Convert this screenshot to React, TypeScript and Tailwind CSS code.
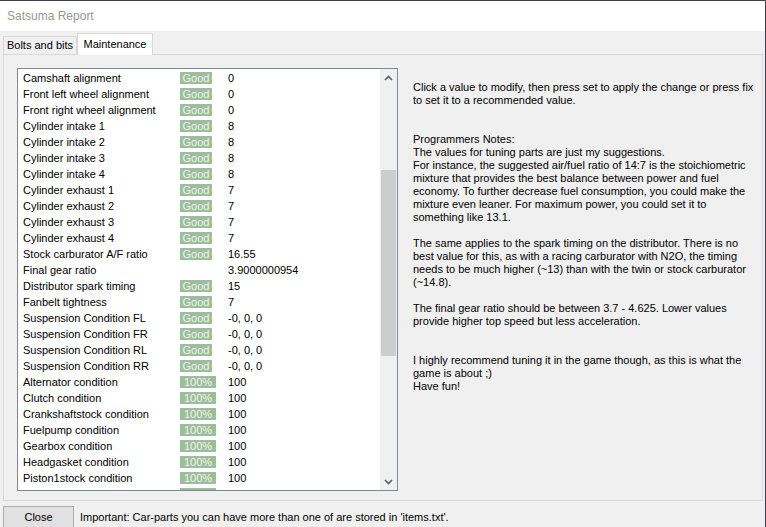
import React from 'react';

type Row = { label: string; badge?: 'Good' | '100%'; value: string };

const rows: Row[] = [
  { label: 'Camshaft alignment', badge: 'Good', value: '0' },
  { label: 'Front left wheel alignment', badge: 'Good', value: '0' },
  { label: 'Front right wheel alignment', badge: 'Good', value: '0' },
  { label: 'Cylinder intake 1', badge: 'Good', value: '8' },
  { label: 'Cylinder intake 2', badge: 'Good', value: '8' },
  { label: 'Cylinder intake 3', badge: 'Good', value: '8' },
  { label: 'Cylinder intake 4', badge: 'Good', value: '8' },
  { label: 'Cylinder exhaust 1', badge: 'Good', value: '7' },
  { label: 'Cylinder exhaust 2', badge: 'Good', value: '7' },
  { label: 'Cylinder exhaust 3', badge: 'Good', value: '7' },
  { label: 'Cylinder exhaust 4', badge: 'Good', value: '7' },
  { label: 'Stock carburator A/F ratio', badge: 'Good', value: '16.55' },
  { label: 'Final gear ratio', value: '3.9000000954' },
  { label: 'Distributor spark timing', badge: 'Good', value: '15' },
  { label: 'Fanbelt tightness', badge: 'Good', value: '7' },
  { label: 'Suspension Condition FL', badge: 'Good', value: '-0, 0, 0' },
  { label: 'Suspension Condition FR', badge: 'Good', value: '-0, 0, 0' },
  { label: 'Suspension Condition RL', badge: 'Good', value: '-0, 0, 0' },
  { label: 'Suspension Condition RR', badge: 'Good', value: '-0, 0, 0' },
  { label: 'Alternator condition', badge: '100%', value: '100' },
  { label: 'Clutch condition', badge: '100%', value: '100' },
  { label: 'Crankshaftstock condition', badge: '100%', value: '100' },
  { label: 'Fuelpump condition', badge: '100%', value: '100' },
  { label: 'Gearbox condition', badge: '100%', value: '100' },
  { label: 'Headgasket condition', badge: '100%', value: '100' },
  { label: 'Piston1stock condition', badge: '100%', value: '100' },
  { label: 'Piston2stock condition', badge: '100%', value: '100' },
];

const notes = [
  'Click a value to modify, then press set to apply the change or press fix',
  'to set it to a recommended value.',
  '',
  '',
  'Programmers Notes:',
  'The values for tuning parts are just my suggestions.',
  'For instance, the suggested air/fuel ratio of 14:7 is the stoichiometric',
  'mixture that provides the best balance between power and fuel',
  'economy. To further decrease fuel consumption, you could make the',
  'mixture even leaner. For maximum power, you could set it to',
  'something like 13.1.',
  '',
  'The same applies to the spark timing on the distributor. There is no',
  'best value for this, as with a racing carburator with N2O, the timing',
  'needs to be much higher (~13) than with the twin or stock carburator',
  '(~14.8).',
  '',
  'The final gear ratio should be between 3.7 - 4.625. Lower values',
  'provide higher top speed but less acceleration.',
  '',
  '',
  'I highly recommend tuning it in the game though, as this is what the',
  'game is about ;)',
  'Have fun!',
].join('\n');

const Chevron: React.FC<{ down?: boolean }> = ({ down }) => (
  <svg width="9" height="6" viewBox="0 0 9 6" className="block">
    <polyline
      points={down ? '1,1 4.5,4.5 8,1' : '1,5 4.5,1.5 8,5'}
      fill="none"
      stroke="#606060"
      strokeWidth="1.6"
    />
  </svg>
);

const App: React.FC = () => {
  return (
    <div className="w-[766px] h-[527px] overflow-hidden bg-[#f0f0f0] border-t border-r border-[#3d4048] flex flex-col font-['Liberation_Sans',Arial,sans-serif] text-[11px] text-black">
      {/* Title bar */}
      <div className="h-[30px] shrink-0 bg-white flex items-center pl-[7px]">
        <span className="text-[12px] text-[#999999]">Satsuma Report</span>
      </div>

      {/* Tabs */}
      <div className="h-[23px] shrink-0 flex items-end pl-[3px]">
        <div className="w-[74px] h-[18px] border border-b-0 border-[#d9d9d9] bg-[#f0f0f0] flex items-center justify-center">
          Bolts and bits
        </div>
        <div className="relative z-10 w-[76px] h-[22px] -mb-px border border-b-0 border-[#d9d9d9] bg-white flex items-center justify-center">
          Maintenance
        </div>
      </div>

      {/* Tab page */}
      <div className="ml-[3px] mr-[2px] h-[447px] shrink-0 border border-[#d9d9d9] bg-[#f0f0f0] flex pt-[13px] pl-[13px]">
        {/* List box */}
        <div className="w-[381px] h-[423px] shrink-0 border border-[#828790] bg-white flex">
          <div className="flex-1 overflow-hidden pt-px">
            {rows.map((r) => (
              <div key={r.label} className="h-[16px] grid grid-cols-[162px_48px_1fr] items-center">
                <span className="pl-[5px] whitespace-nowrap">{r.label}</span>
                <span>
                  {r.badge && (
                    <span
                      className={`flex h-[12px] items-center justify-center bg-[#9dbe9a] text-[#f2f2f2] ${
                        r.badge === 'Good' ? 'w-[32px]' : 'w-[36px]'
                      }`}
                    >
                      {r.badge}
                    </span>
                  )}
                </span>
                <span className="whitespace-nowrap">{r.value}</span>
              </div>
            ))}
          </div>
          {/* Scrollbar */}
          <div className="w-[17px] shrink-0 bg-[#f0f0f0] flex flex-col">
            <div className="h-[17px] flex items-center justify-center">
              <Chevron />
            </div>
            <div className="flex-1">
              <div className="mt-[84px] mx-px h-[186px] bg-[#cdcdcd]" />
            </div>
            <div className="h-[17px] flex items-center justify-center">
              <Chevron down />
            </div>
          </div>
        </div>

        {/* Notes */}
        <div className="pl-[15px] pt-[13px] leading-[13px] whitespace-pre">{notes}</div>
      </div>

      {/* Bottom bar */}
      <div className="flex items-start pt-[5px] pl-[3px]">
        <button className="w-[71px] h-[22px] shrink-0 bg-[#e1e1e1] border border-[#adadad] flex items-center justify-center text-[11px]">
          Close
        </button>
        <span className="pl-[6px] h-[22px] flex items-center">
          Important: Car-parts you can have more than one of are stored in 'items.txt'.
        </span>
      </div>
    </div>
  );
};

export default App;
